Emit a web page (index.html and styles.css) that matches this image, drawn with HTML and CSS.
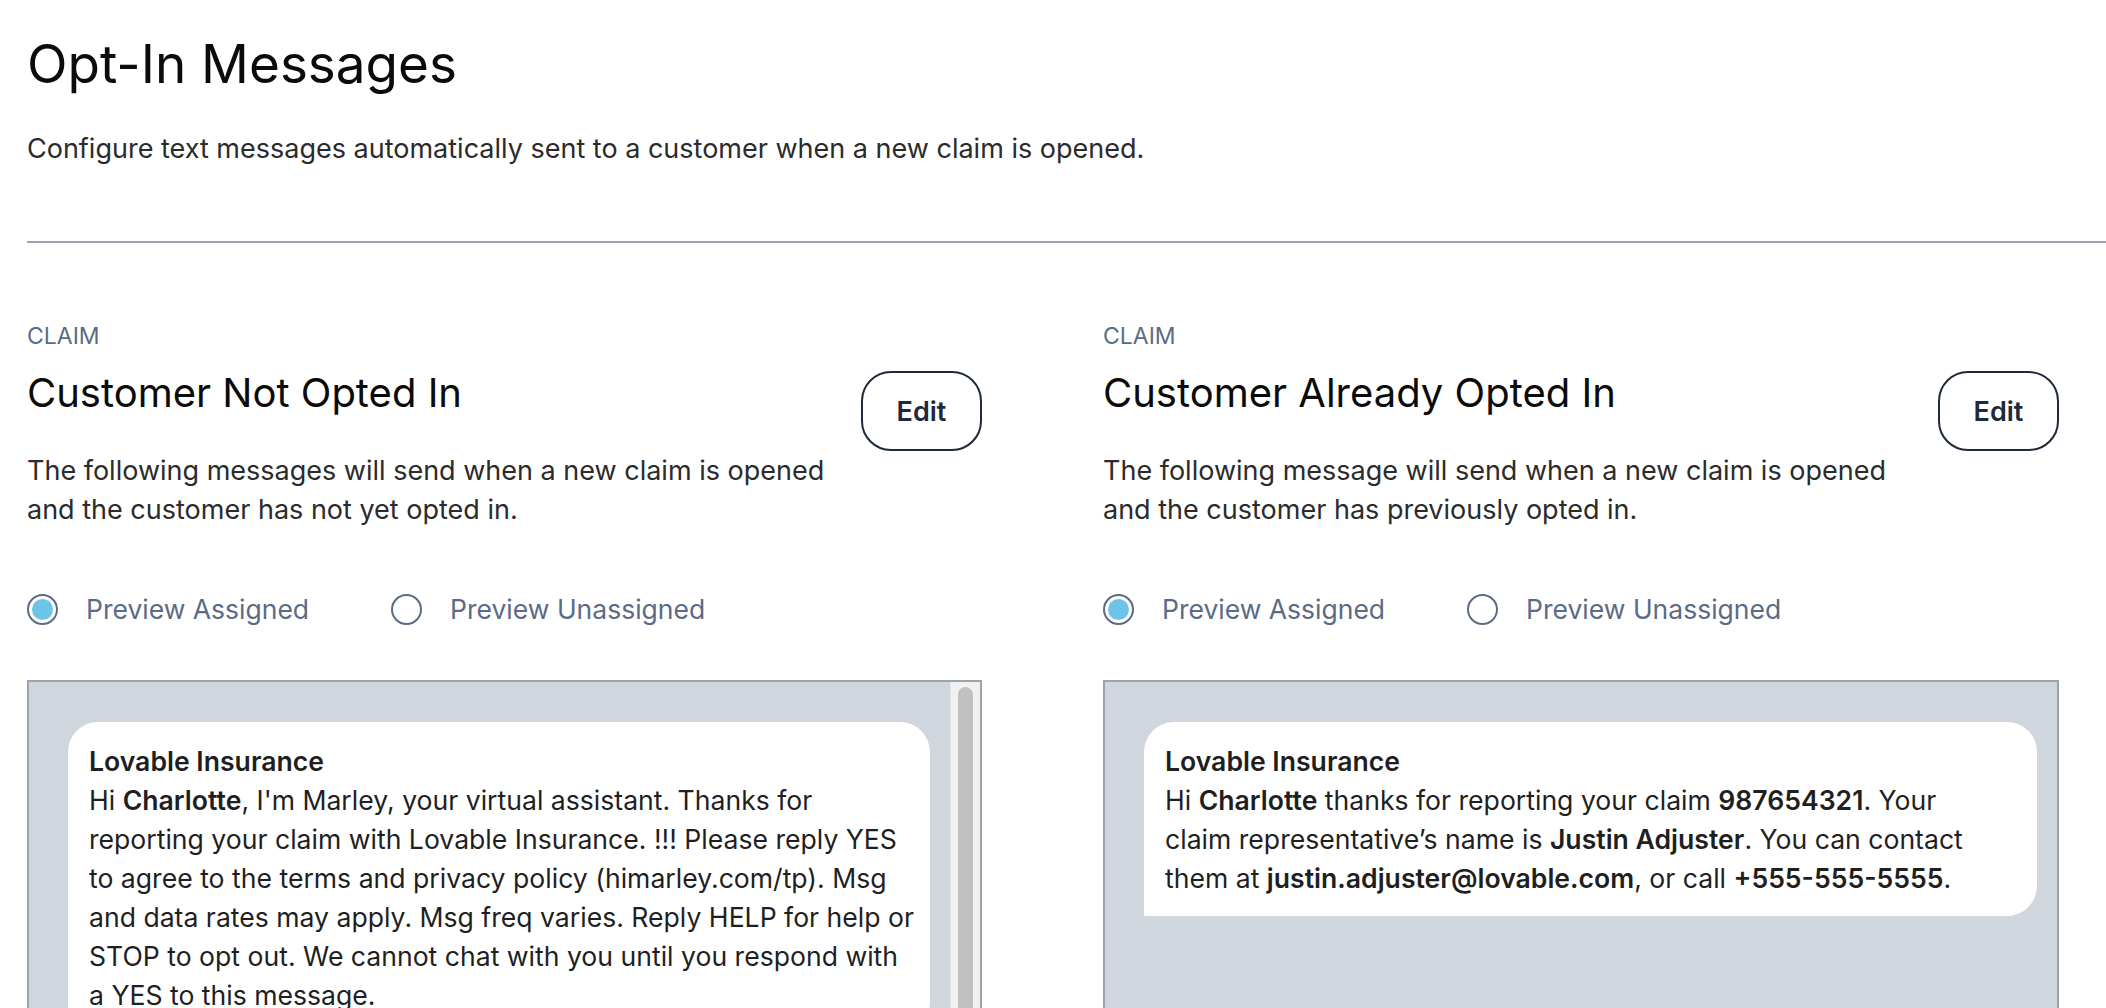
FILE: index.html
```html
<!DOCTYPE html>
<html lang="en">
<head>
  <meta charset="UTF-8" />
  <meta name="viewport" content="width=device-width, initial-scale=1.0"/>
  <title>Opt-In Messages</title>
  <link rel="stylesheet" href="styles.css">
</head>
<body>

  <main class="page">
    <h1 class="page-title">Opt-In Messages</h1>
    <p class="page-intro">Configure text messages automatically sent to a customer when a new claim is opened.</p>

    <hr class="divider">

    <div class="columns">
      <section class="template">
        <div class="template-kind">CLAIM</div>
        <div class="template-head">
          <div>
            <h2 class="template-title">Customer Not Opted In</h2>
            <p class="template-desc">The following messages will send when a new claim is opened<br>and the customer has not yet opted in.</p>
          </div>
          <button class="edit-btn">Edit</button>
        </div>

        <div class="preview-toggle">
          <label class="radio"><input type="radio" name="preview-1" checked>Preview Assigned</label>
          <label class="radio"><input type="radio" name="preview-1">Preview Unassigned</label>
        </div>

        <div class="preview">
          <div class="preview-body">
            <div class="bubble">
              <div class="bubble-from">Lovable Insurance</div>
              <p class="bubble-text">Hi <b>Charlotte</b>, I'm Marley, your virtual assistant. Thanks for<br>reporting your claim with Lovable Insurance. !!! Please reply YES<br>to agree to the terms and privacy policy (himarley.com/tp). Msg<br>and data rates may apply. Msg freq varies. Reply HELP for help or<br>STOP to opt out. We cannot chat with you until you respond with<br>a YES to this message.</p>
            </div>
            <div class="bubble">
              <div class="bubble-from">Lovable Insurance</div>
              <p class="bubble-text">Your claim representative is <b>Justin Adjuster</b>.</p>
            </div>
          </div>
          <!-- scrollbar drawn by hand, the screenshot browser hides native ones -->
          <div class="scrollbar"><div class="scrollbar-thumb"></div></div>
        </div>
      </section>

      <section class="template">
        <div class="template-kind">CLAIM</div>
        <div class="template-head">
          <div>
            <h2 class="template-title">Customer Already Opted In</h2>
            <p class="template-desc">The following message will send when a new claim is opened<br>and the customer has previously opted in.</p>
          </div>
          <button class="edit-btn">Edit</button>
        </div>

        <div class="preview-toggle">
          <label class="radio"><input type="radio" name="preview-2" checked>Preview Assigned</label>
          <label class="radio"><input type="radio" name="preview-2">Preview Unassigned</label>
        </div>

        <div class="preview">
          <div class="preview-body">
            <div class="bubble">
              <div class="bubble-from">Lovable Insurance</div>
              <p class="bubble-text">Hi <b>Charlotte</b> thanks for reporting your claim <b>987654321</b>. Your<br>claim representative’s name is <b>Justin Adjuster</b>. You can contact<br>them at <b>justin.adjuster@lovable.com</b>, or call <b>+555-555-5555</b>.</p>
            </div>
          </div>
        </div>
      </section>
    </div>
  </main>

</body>
</html>
```

FILE: styles.css
```css
html, body {
  overflow: hidden;
}

body {
  margin: 0;
  background: #fff;
  font-family: 'Inter', 'Liberation Sans', sans-serif;
  color: #2b2b2b;
}

.page {
  padding-left: 27px;
}

.page-title {
  margin: 32px 0 0;
  font-size: 53px;
  line-height: 64px;
  font-weight: 400;
  color: #0b0b0b;
}

.page-intro {
  margin: 33px 0 0;
  font-size: 27px;
  line-height: 39px;
}

.divider {
  margin: 73px 0 0;
  border: none;
  border-top: 2px solid #9ca3af;
}

.columns {
  display: grid;
  grid-template-columns: 955px 956px;
  column-gap: 121px;
}

.template-kind {
  margin-top: 77px;
  font-size: 23px;
  line-height: 33px;
  color: #5b6b85;
}

.template-head {
  display: flex;
  justify-content: space-between;
  align-items: flex-start;
  margin-top: 16px;
}

.template-title {
  margin: 0;
  font-size: 40px;
  line-height: 48px;
  font-weight: 400;
  color: #0b0b0b;
}

.template-desc {
  margin: 34px 0 0;
  font-size: 27px;
  line-height: 39px;
}

.edit-btn {
  margin-top: 2px;
  width: 121px;
  height: 80px;
  background: #fff;
  border: 2px solid #1e293b;
  border-radius: 30px;
  font-family: inherit;
  font-size: 27px;
  font-weight: 600;
  color: #1e293b;
  cursor: pointer;
}

.preview-toggle {
  display: flex;
  gap: 82px;
  margin-top: 61px;
  height: 39px;
}

.radio {
  display: flex;
  align-items: center;
  gap: 28px;
  font-size: 26.5px;
  line-height: 39px;
  color: #5b6b85;
  cursor: pointer;
}

.radio input {
  appearance: none;
  margin: 0;
  width: 31px;
  height: 31px;
  padding: 3px;
  border: 2px solid #5b6b85;
  border-radius: 50%;
  background-clip: content-box;
}

.radio input:checked {
  background-color: #6cc4e8;
}

.preview {
  display: flex;
  margin-top: 51px;
  height: 500px;
  overflow: hidden;
  background: #cfd6de;
  border: 2px solid #9ca3af;
}

.preview-body {
  flex: 1;
  min-width: 0;
  padding: 40px 20px 40px 39px;
}

.scrollbar {
  flex-shrink: 0;
  width: 30px;
  box-sizing: border-box;
  padding: 5px 7px;
  background: #f1f1f1;
  border-left: 1px solid #e4e4e4;
}

.scrollbar-thumb {
  height: 400px;
  border-radius: 8px;
  background: #c1c1c1;
}

.bubble {
  background: #fff;
  border-radius: 30px 30px 30px 0;
  padding: 20px 21px 18px;
  margin-bottom: 30px;
  color: #1f1f1f;
  font-size: 26.6px;
  line-height: 39px;
}

.bubble-from {
  font-weight: 600;
}

.bubble-text {
  margin: 0;
  white-space: nowrap;
}

.bubble-text b {
  font-weight: 600;
}
```
